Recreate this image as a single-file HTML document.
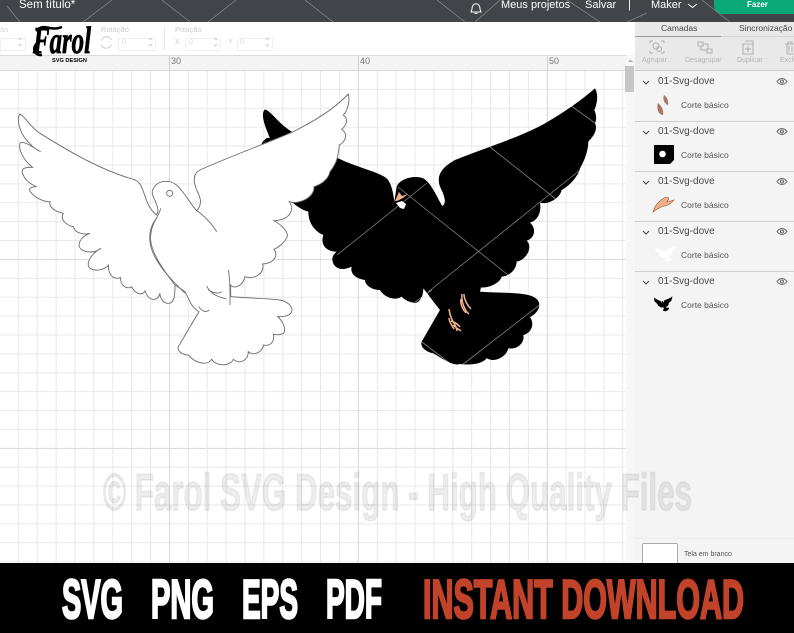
<!DOCTYPE html>
<html lang="pt"><head><meta charset="utf-8"><title>Sem título</title>
<style>
html,body{margin:0;padding:0;background:#fff}
#p{position:relative;width:794px;height:633px;overflow:hidden;font-family:"Liberation Sans",sans-serif;background:#fff}
#p div{position:absolute}
.t{position:absolute;white-space:nowrap}
#grid{left:0;top:70px;width:626px;height:494px;background-color:#fff;
background-image:
linear-gradient(to right,#dbdbdb 1px,transparent 1px),
linear-gradient(to bottom,#dbdbdb 1px,transparent 1px),
linear-gradient(to right,#e8e8e8 1px,transparent 1px),
linear-gradient(to bottom,#e8e8e8 1px,transparent 1px);
background-size:189px 189px,189px 189px,18.9px 18.9px,18.9px 18.9px;
background-position:169px 0,0 0,17.8px 0,0 0}
.ln{font-size:10px;color:#4a4a4a;left:658px}
.cb{font-size:8.5px;color:#555;left:681px}
.tl{font-size:7px;color:#b4b4b4;top:57px}
.sep{left:635px;width:159px;height:1px;background:#cfcfcf}
</style></head><body>
<div id="p">
<div style="left:0;top:0;width:794px;height:22px;background:#414549"></div>
<span class="t" style="left:19px;top:-1px;font-size:11.500px;color:#fff">Sem título*</span>
<span class="t" style="left:501px;top:-1px;font-size:11px;color:#fff">Meus projetos</span>
<span class="t" style="left:585px;top:-1px;font-size:11px;color:#fff">Salvar</span>
<span class="t" style="left:628px;top:-1px;font-size:11px;color:#fff">|</span>
<span class="t" style="left:651px;top:-1px;font-size:11px;color:#fff">Maker</span>
<div style="left:714px;top:0;width:80px;height:14px;background:#0aa877;border-radius:0 0 0 8px"></div>
<span class="t" style="left:747px;top:0;font-size:8px;font-weight:bold;color:#fff">Fazer</span>
<svg style="position:absolute;left:0;top:0" width="794" height="22" fill="none">
<path d="M472 9c0-7 8-7 8 0l1 3h-10zM474.500 13.500h3" stroke="#fff" stroke-width="1"/>
<path d="M688 4l4.500 3.500 4.500-3.500" stroke="#fff" stroke-width="1"/>
<g stroke="#8b8e91" stroke-width=".7"><path d="M7 6l13 16M112 0L83 22M162 0l28 22M236 0l-28 22M305 0l28 22M437 0l28 22M500 0l-25 22M567 0l33 22M647 13l-20 9M702 0l28 22"/></g>
</svg>

<!-- toolbar -->
<div style="left:0;top:22px;width:635px;height:33px;background:#fff"></div>
<span class="t" style="left:101px;top:25px;font-size:7.500px;color:#c9c9c9">Rotação</span>
<span class="t" style="left:175px;top:25px;font-size:7.500px;color:#c9c9c9">Posição</span>
<span class="t" style="left:175px;top:39px;font-size:7px;color:#c9c9c9">X</span>
<span class="t" style="left:228px;top:39px;font-size:7px;color:#c9c9c9">Y</span>
<span class="t" style="left:0;top:25px;font-size:7.500px;color:#d5d5d5">ão</span>
<div style="left:164px;top:27px;width:1px;height:23px;background:#e5e5e5"></div>
<div style="left:0;top:38px;width:24px;height:11px;border:1px solid #f0f0f0"></div>
<div style="left:118px;top:38px;width:36px;height:11px;border:1px solid #f0f0f0"></div>
<div style="left:185px;top:38px;width:34px;height:11px;border:1px solid #f0f0f0"></div>
<div style="left:237px;top:38px;width:34px;height:11px;border:1px solid #f0f0f0"></div>
<span class="t" style="left:122px;top:39px;font-size:7px;color:#ddd">0</span>
<span class="t" style="left:189px;top:39px;font-size:7px;color:#ddd">0</span>
<span class="t" style="left:240px;top:39px;font-size:7px;color:#ddd">0</span>
<svg style="position:absolute;left:0;top:24px" width="280" height="30" fill="none" stroke="#cfcfcf" stroke-width="1">
<path d="M111.500 16a5.500 5.500 0 0 0-9-1.500l-1 2M101 21a5.500 5.500 0 0 0 9 1.500l1.500-2"/>
<path d="M18.500 16l1.500-2 1.500 2M18.500 20l1.500 2 1.500-2M149 16l1.500-2 1.500 2M149 20l1.500 2 1.500-2M214 16l1.500-2 1.500 2M214 20l1.500 2 1.500-2M266 16l1.500-2 1.500 2M266 20l1.500 2 1.500-2"/>
</svg>

<!-- ruler -->
<div style="left:0;top:55px;width:626px;height:15px;background:#f4f4f4;border-top:1px solid #dcdcdc;box-sizing:border-box"></div>
<span class="t" style="left:171px;top:56px;font-size:9px;color:#777">30</span>
<span class="t" style="left:360px;top:56px;font-size:9px;color:#777">40</span>
<span class="t" style="left:549px;top:56px;font-size:9px;color:#777">50</span>
<div style="left:169px;top:55px;width:1px;height:15px;background:#d0d0d0"></div>
<div style="left:358px;top:55px;width:1px;height:15px;background:#d0d0d0"></div>
<div style="left:547px;top:55px;width:1px;height:15px;background:#d0d0d0"></div>

<div id="grid"></div>

<!-- canvas art -->
<svg style="position:absolute;left:0;top:0" width="635" height="564">
<defs>
<path id="dove" d="M60 72C75 80 90 110 120 130C200 180 300 240 400 268C440 280 425 340 470 375C485 350 450 320 458 300C470 270 510 265 535 290C555 310 570 340 590 362C610 340 600 320 590 300C578 270 580 250 600 240C700 195 800 160 880 125C950 90 1010 50 1045 12C1050 30 1045 60 1030 75C1050 90 1035 110 1025 118C1050 135 1030 160 1018 165C1015 200 1010 220 990 245C985 270 960 285 942 290C945 320 900 345 868 335C885 360 870 390 822 392C845 405 865 425 862 440C855 455 840 470 822 478C835 495 825 520 788 522C795 545 770 570 735 560C730 585 705 600 692 585L692 620C750 625 800 625 840 630C870 635 885 660 870 672C860 680 845 680 833 680C850 695 860 720 850 730C840 735 830 735 820 733C825 755 810 770 790 765C790 785 760 800 745 785C745 810 720 825 700 808C690 830 650 830 635 808C625 825 590 825 565 795C550 795 530 785 535 770L597 665C570 650 565 620 555 605L525 585C525 610 525 640 505 640C490 640 480 625 480 610C470 640 445 630 435 603C425 620 405 610 395 590C380 600 360 585 362 563C340 570 325 555 325 525C315 540 285 545 270 535C255 520 275 490 303 475C290 485 270 490 250 482C225 470 240 440 270 430C250 435 225 430 220 410C195 405 180 385 190 370C165 365 145 350 150 335C130 335 110 325 95 310C80 295 95 290 110 290C95 285 75 270 70 255C60 240 70 230 98 232C70 210 55 180 60 160C70 150 95 170 122 185C110 180 95 170 80 150C60 130 48 85 60 72Z"/>
</defs>
<!-- black dove -->
<g transform="translate(255,80) scale(.3333)">
<path fill="#000" d="M30 88C50 95 70 130 110 155L250 235C300 260 370 275 395 295C410 310 415 340 418 365L425 320C435 295 480 285 505 295C530 310 545 350 562 378C575 370 570 350 555 320C545 290 555 265 600 240C700 200 800 170 870 130C930 95 980 60 1020 25C1030 40 1028 70 1018 90C1025 105 1025 120 1020 130C1028 145 1020 165 1000 185C1000 210 990 240 975 265C970 290 940 320 920 330C915 355 880 375 855 368C860 395 850 420 825 428C845 445 840 475 815 482C835 500 815 540 785 545C785 570 760 590 740 590C735 610 700 625 678 622L675 635C720 640 790 635 830 648C860 660 860 685 835 705L825 712C840 730 830 760 805 765C810 785 790 810 760 805C755 830 720 850 695 835C680 855 640 855 615 852C595 860 560 835 535 820C510 815 495 800 500 785L555 690C535 665 525 650 505 625C505 655 490 672 475 668C455 665 445 655 440 650C420 665 385 650 375 630C350 630 330 615 330 600C300 595 285 580 290 560C260 575 235 565 232 540C232 525 240 520 245 515C215 515 195 495 205 465C180 455 160 430 160 395C140 390 120 375 110 365L20 300V190C30 175 40 170 45 175C30 140 15 100 30 88Z"/>
</g>
<path d="M396 203l6-2 4 3-2 5-4-1z" fill="#fff"/>
<path d="M395 201l4-9 3 4 6-2-5 4-6 3z" fill="#f2b48c"/>
<g fill="none" stroke="#f2b48c" stroke-width="1.500">
<path d="M462 294c-1 8 3 17 7 20M464 294c0 6 4 12 7 15M461 299c-1 5 2 11 5 14"/>
<path d="M449 309c1 6 2 10 5 14 2 4 3 6 3 8M451 321c3 1 7 3 9 6M453 325c3 3 7 5 8 6M449 318c0 3 3 8 5 11"/>
</g>
<!-- watermark lines over black -->
<g stroke="#fff" stroke-opacity=".5" stroke-width=".8">
<path d="M337 255L427 183M398 187L508 275M428 292L580 170M490 147L557 200M570 105L595 123M415 302L432 290M422 342L452 365M462 365L542 303"/>
</g>
<!-- white dove -->
<g transform="translate(0,90) scale(.3333)">
<use href="#dove" fill="#fff" stroke="#6f6f6f" stroke-width="2.800"/>
<g fill="none" stroke="#666" stroke-width="2.500">
<circle cx="509" cy="310" r="9"/>
<path d="M470 385C440 420 445 470 470 510C490 545 520 575 555 610"/>
<path d="M482 355C478 380 450 400 452 450C455 490 490 540 525 585"/>
<path d="M590 362C610 375 635 400 650 425"/>
<path d="M685 540C692 580 690 620 690 645"/>
<path d="M620 588C630 610 650 620 680 627M625 600C640 610 660 612 665 605"/>
<path d="M597 650C605 665 620 668 628 660"/>
</g>
</g>
<!-- logo -->
<g>
<text x="33" y="53" font-family="Liberation Serif" font-style="italic" font-weight="bold" font-size="38" textLength="58" lengthAdjust="spacingAndGlyphs" stroke="#000" stroke-width=".8">Farol</text>
<path d="M36 31C44 22 50 32 62 27M42 55C32 56 32 44 40 42" fill="none" stroke="#000" stroke-width="2.500"/>
<text x="52" y="62" font-family="Liberation Sans" font-weight="bold" font-size="5.500" textLength="35" lengthAdjust="spacingAndGlyphs">SVG DESIGN</text>
</g>
</svg>

<!-- scrollbar -->
<div style="left:626px;top:55px;width:9px;height:509px;background:#f6f6f6"></div>
<div style="left:625px;top:66px;width:9px;height:26px;background:#c6c6c6"></div>
<svg style="position:absolute;left:626px;top:58px" width="9" height="6"><path d="M2 4l2.500-2.500L7 4z" fill="#aaa"/></svg>

<!-- right panel -->
<div style="left:635px;top:22px;width:159px;height:542px;background:#f4f4f4"></div>
<div style="left:635px;top:22px;width:159px;height:49px;background:#e9e9e9"></div>
<div style="left:635px;top:36px;width:86px;height:1px;background:#9a9a9a"></div>
<div style="left:721px;top:36px;width:73px;height:1px;background:#d4d4d4"></div>
<span class="t" style="left:661px;top:23px;font-size:8.500px;color:#444">Camadas</span>
<span class="t" style="left:739px;top:23px;font-size:8.500px;color:#444">Sincronização</span>
<svg style="position:absolute;left:635px;top:38px" width="159" height="22" fill="none" stroke="#b0b0b0" stroke-width="1">
<path d="M15 5V3h3M26 3h3v2M29 13v2h-3M18 15h-3v-2"/><circle cx="21" cy="8" r="3"/><circle cx="24" cy="11" r="2.500"/>
<path d="M63 4h5v4h-5zM72 11h5v4h-5zM68 6h5v5M66 8v4h6"/>
<path d="M110 3h8v3M108 6h10v10h-10zM113 8v6M110 11h6"/>
<path d="M150 6h9M152 6v10h7M153 6V4h4v2M154 8v6M157 8v6"/>
</svg>
<span class="t tl" style="left:642px">Agrupar</span>
<span class="t tl" style="left:685px">Desagrupar</span>
<span class="t tl" style="left:737px">Duplicar</span>
<span class="t tl" style="left:780px">Excluir</span>
<div class="sep" style="top:70px"></div>
<div class="sep" style="top:121px"></div>
<div class="sep" style="top:171px"></div>
<div class="sep" style="top:221px"></div>
<div class="sep" style="top:271px"></div>

<span class="t ln" style="top:76px">01-Svg-dove</span><span class="t cb" style="top:100px">Corte básico</span>
<span class="t ln" style="top:126px">01-Svg-dove</span><span class="t cb" style="top:150px">Corte básico</span>
<span class="t ln" style="top:176px">01-Svg-dove</span><span class="t cb" style="top:200px">Corte básico</span>
<span class="t ln" style="top:226px">01-Svg-dove</span><span class="t cb" style="top:250px">Corte básico</span>
<span class="t ln" style="top:276px">01-Svg-dove</span><span class="t cb" style="top:300px">Corte básico</span>

<svg style="position:absolute;left:635px;top:70px" width="159" height="250">
<g fill="none" stroke="#444" stroke-width="1">
<path d="M8 11l3 3 3-3M8 61l3 3 3-3M8 111l3 3 3-3M8 161l3 3 3-3M8 211l3 3 3-3"/>
<g stroke="#666"><path d="M142 11.500c3-4 7-4 10 0-3 4-7 4-10 0z"/><circle cx="147" cy="11.500" r="1.500"/>
<path d="M142 61.500c3-4 7-4 10 0-3 4-7 4-10 0z"/><circle cx="147" cy="61.500" r="1.500"/>
<path d="M142 111.500c3-4 7-4 10 0-3 4-7 4-10 0z"/><circle cx="147" cy="111.500" r="1.500"/>
<path d="M142 161.500c3-4 7-4 10 0-3 4-7 4-10 0z"/><circle cx="147" cy="161.500" r="1.500"/>
<path d="M142 211.500c3-4 7-4 10 0-3 4-7 4-10 0z"/><circle cx="147" cy="211.500" r="1.500"/></g>
</g>
<!-- feet thumb -->
<path d="M29 25c3 2 5 6 4 10-3-1-6-5-4-10zM23 33c4 3 6 8 5 12-4 0-7-6-5-12z" fill="#a8776a"/>
<!-- square thumb -->
<path d="M19 75h20v15l-4 4H19z" fill="#000"/><circle cx="27.500" cy="84" r="3.300" fill="#fff"/>
<!-- beak thumb -->
<path d="M18 142c2-7 7-13 14-15 2 0 2 2 0 5l7-2c-2 3-5 5-9 6-5 1-8 3-12 6z" fill="#f2ae8c" stroke="#8a5a3a" stroke-width=".6"/>
<!-- white dove thumb -->
<g transform="translate(19,175) scale(.0205,.0205)"><use href="#dove" fill="#fff"/></g>
<!-- black dove thumb -->
<g transform="translate(18,226) scale(.0185,.0185)"><use href="#dove" fill="#000"/></g>
</svg>

<div style="left:635px;top:538px;width:159px;height:1px;background:#ececec"></div>
<div style="left:642px;top:543px;width:34px;height:24px;background:#fff;border:1px solid #aaa;border-radius:2px"></div>
<span class="t" style="left:684px;top:551px;font-size:7px;color:#555">Tela em branco</span>

<!-- bottom banner -->
<svg style="position:absolute;left:0;top:0" width="794" height="633">
<text x="103" y="510" font-family="Liberation Sans" font-weight="bold" font-size="52" textLength="589" lengthAdjust="spacingAndGlyphs" fill="#000" fill-opacity=".07" stroke="#000" stroke-opacity=".05" stroke-width="2">© Farol SVG Design - High Quality Files</text>
<rect x="0" y="563" width="794" height="70" fill="#000"/>
<g font-family="Liberation Sans" font-weight="bold" font-size="55" fill="#fff" stroke="#fff" stroke-width="2.500">
<text x="62" y="618" textLength="61" lengthAdjust="spacingAndGlyphs">SVG</text>
<text x="151" y="618" textLength="63" lengthAdjust="spacingAndGlyphs">PNG</text>
<text x="242" y="618" textLength="56" lengthAdjust="spacingAndGlyphs">EPS</text>
<text x="326" y="618" textLength="56" lengthAdjust="spacingAndGlyphs">PDF</text>
<text x="423" y="618" textLength="321" lengthAdjust="spacingAndGlyphs" fill="#c1432a" stroke="#c1432a">INSTANT DOWNLOAD</text>
</g>
</svg>
</div>
</body></html>
